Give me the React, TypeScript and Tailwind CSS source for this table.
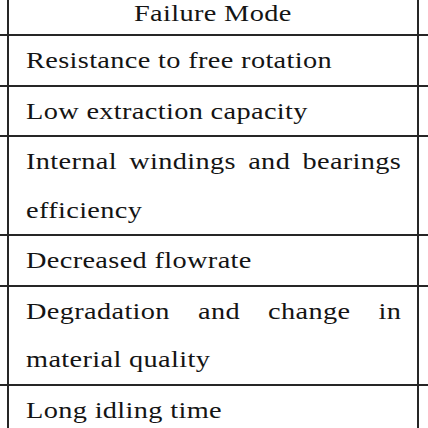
import React from "react";

const rows: string[] = [
  "Resistance to free rotation",
  "Low extraction capacity",
  "Internal windings and bearings efficiency",
  "Decreased flowrate",
  "Degradation and change in material quality",
  "Long idling time",
];

export default function App() {
  return (
    <div
      className="w-[428px] h-[428px] overflow-hidden bg-white text-[#141414]"
      style={{ fontFamily: '"Liberation Serif", "DejaVu Serif", serif' }}
    >
      <div className="grid grid-cols-[7px_412px_9px] h-[34px]">
        <div />
        <div className="border-x-2 border-[#262626] text-center text-[24px] leading-[27px]">
          <span className="inline-block scale-x-[1.18] tracking-[0.3px]">Failure Mode</span>
        </div>
        <div />
      </div>
      {rows.map((r) => (
        <div
          key={r}
          className="grid grid-cols-[7px_412px_9px] border-t-2 border-[#262626]"
        >
          <div />
          <div className="border-x-2 border-[#262626] pl-[17px] pr-[15px] text-[24px] leading-[48.5px]">
            <div className="w-[318px] origin-left scale-x-[1.18] tracking-[0.3px] text-justify">
              {r}
            </div>
          </div>
          <div />
        </div>
      ))}
    </div>
  );
}
